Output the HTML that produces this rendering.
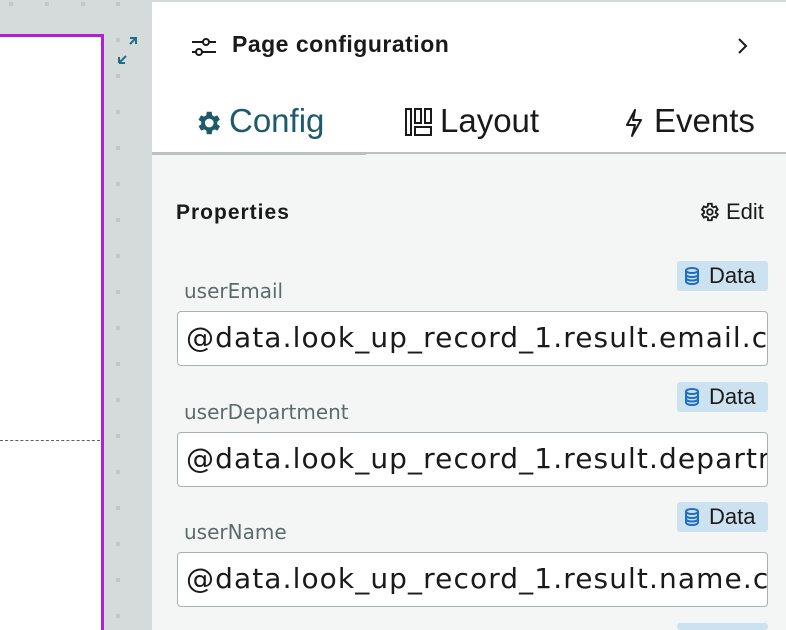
<!DOCTYPE html>
<html style="overflow:hidden;width:786px;height:630px"><head><meta charset="utf-8"><style>
*{margin:0;padding:0;box-sizing:border-box}
body{width:786px;height:630px;overflow:hidden;position:relative;background:#d5dbdb;font-family:"Liberation Sans",sans-serif}
.a{position:absolute}
.dot{position:absolute;width:4px;height:4px;background:#c2c8c8}
.canvas{left:0;top:34px;width:104px;height:596px;background:#fff;border-top:3px solid #b31fd6;border-right:3px solid #b31fd6}
.panel{left:152px;top:2px;width:634px;height:628px;background:#f4f6f6}
.head{left:152px;top:2px;width:634px;height:152px;background:#fff;border-bottom:2px solid #b9c1c1}
.tab{position:absolute;top:102px;font-size:33px;color:#1a1a1a}
.badge{position:absolute;left:677px;width:91px;height:30px;background:#cde2f0;border-radius:3px;font-size:22px;color:#1a1a1a;padding-left:32px;line-height:30px;overflow:hidden}
.badge svg{position:absolute;left:7px;top:6px}
.lbl{position:absolute;left:184px;font-size:20px;color:#5e6b6b;font-family:"DejaVu Sans",sans-serif}
.inp{position:absolute;left:177px;width:591px;height:55px;background:#fff;border:1.5px solid #a9b2b2;border-radius:4px;font-size:28px;letter-spacing:1.1px;color:#1a1a1a;padding-left:8px;line-height:52px;overflow:hidden;white-space:nowrap;font-family:"DejaVu Sans",sans-serif}
</style></head><body>
<div class="dot" style="left:9px;top:2px"></div><div class="dot" style="left:45px;top:2px"></div><div class="dot" style="left:81px;top:2px"></div><div class="dot" style="left:116px;top:2px"></div>
<div class="dot" style="left:116px;top:38px"></div><div class="dot" style="left:116px;top:74px"></div><div class="dot" style="left:116px;top:110px"></div><div class="dot" style="left:116px;top:146px"></div><div class="dot" style="left:116px;top:182px"></div><div class="dot" style="left:116px;top:218px"></div><div class="dot" style="left:116px;top:254px"></div><div class="dot" style="left:116px;top:290px"></div><div class="dot" style="left:116px;top:326px"></div><div class="dot" style="left:116px;top:362px"></div><div class="dot" style="left:116px;top:398px"></div><div class="dot" style="left:116px;top:434px"></div><div class="dot" style="left:116px;top:470px"></div><div class="dot" style="left:116px;top:506px"></div><div class="dot" style="left:116px;top:542px"></div><div class="dot" style="left:116px;top:578px"></div><div class="dot" style="left:116px;top:614px"></div>
<div class="a canvas"></div>
<div class="a" style="left:0;top:440px;width:100px;border-top:1.5px dashed #5a6363"></div>
<svg class="a" style="left:116px;top:34px" width="34" height="32" viewBox="0 0 34 32" fill="none" stroke="#1f6f86" stroke-width="2"><path d="M14 4h6v6M20 4l-6 6M3 29v-6M3 29h6M3 29l7-7"/></svg>
<div class="a panel"></div>
<div class="a head"></div>
<div class="a" style="left:152px;top:152px;width:214px;height:3px;background:#b9c1c1"></div>
<svg class="a" style="left:191px;top:36px" width="26" height="22" viewBox="0 0 26 22" fill="none" stroke="#1a1a1a" stroke-width="2"><path d="M1 6h24M1 16h24"/><circle cx="15" cy="6" r="3" fill="#fff"/><circle cx="8" cy="16" r="3" fill="#fff"/></svg>
<div class="a" style="left:232px;top:31px;font-size:23px;font-weight:bold;color:#1a1a1a;letter-spacing:0.5px">Page configuration</div>
<svg class="a" style="left:737px;top:37px" width="12" height="18" viewBox="0 0 12 18" fill="none" stroke="#1a1a1a" stroke-width="2"><path d="M2 2l7 7-7 7"/></svg>
<svg class="a" style="left:193px;top:108px" width="30" height="30" viewBox="0 0 24 24"><path fill="#1d5a6b" d="M19.4 13a7.5 7.5 0 000-2l2.1-1.6-2-3.5-2.5 1a7.5 7.5 0 00-1.7-1L15 3h-4l-.4 2.9a7.5 7.5 0 00-1.7 1l-2.5-1-2 3.5L6.6 11a7.5 7.5 0 000 2l-2.1 1.6 2 3.5 2.5-1a7.5 7.5 0 001.7 1L11 21h4l.4-2.9a7.5 7.5 0 001.7-1l2.5 1 2-3.5zM13 15.5a3.5 3.5 0 110-7 3.5 3.5 0 010 7z"/></svg>
<div class="tab" style="left:229px;color:#1d5a6b">Config</div>
<svg class="a" style="left:405px;top:108px" width="32" height="28" viewBox="0 0 32 28" fill="none" stroke="#1a1a1a" stroke-width="2"><rect x="1" y="1" width="5" height="26"/><rect x="10" y="1" width="6" height="14"/><rect x="20" y="1" width="6" height="14"/><rect x="10" y="19" width="16" height="8"/></svg>
<div class="tab" style="left:440px">Layout</div>
<svg class="a" style="left:623px;top:108px" width="22" height="30" viewBox="0 0 22 30" fill="none" stroke="#1a1a1a" stroke-width="2" stroke-linejoin="round"><path d="M12 2L4 17h8l-3 11 9-16h-8z"/></svg>
<div class="tab" style="left:654px">Events</div>
<div class="a" style="left:176px;top:201px;font-size:21px;font-weight:bold;color:#1a1a1a;letter-spacing:1px">Properties</div>
<svg class="a" style="left:698px;top:201px" width="22" height="22" viewBox="0 0 24 24" fill="none" stroke="#1a1a1a" stroke-width="2"><path d="M19.4 13a7.5 7.5 0 000-2l2.1-1.6-2-3.5-2.5 1a7.5 7.5 0 00-1.7-1L15 3h-4l-.4 2.9a7.5 7.5 0 00-1.7 1l-2.5-1-2 3.5L6.6 11a7.5 7.5 0 000 2l-2.1 1.6 2 3.5 2.5-1a7.5 7.5 0 001.7 1L11 21h4l.4-2.9a7.5 7.5 0 001.7-1l2.5 1 2-3.5z"/><circle cx="13" cy="12" r="3"/></svg>
<div class="a" style="left:726px;top:199px;font-size:22px;color:#1a1a1a">Edit</div>

<div class="badge" style="top:261px"><svg width="16" height="18" viewBox="0 0 16 18" fill="none" stroke="#1f6fc0" stroke-width="2"><ellipse cx="8" cy="3.5" rx="6" ry="2.5"/><path d="M2 3.5v11c0 1.4 2.7 2.5 6 2.5s6-1.1 6-2.5v-11M2 7.5c0 1.4 2.7 2.5 6 2.5s6-1.1 6-2.5M2 11c0 1.4 2.7 2.5 6 2.5s6-1.1 6-2.5"/></svg>Data</div>
<div class="lbl" style="top:279px">userEmail</div>
<div class="inp" style="top:311px">@data.look_up_record_1.result.email.current</div>

<div class="badge" style="top:382px"><svg width="16" height="18" viewBox="0 0 16 18" fill="none" stroke="#1f6fc0" stroke-width="2"><ellipse cx="8" cy="3.5" rx="6" ry="2.5"/><path d="M2 3.5v11c0 1.4 2.7 2.5 6 2.5s6-1.1 6-2.5v-11M2 7.5c0 1.4 2.7 2.5 6 2.5s6-1.1 6-2.5M2 11c0 1.4 2.7 2.5 6 2.5s6-1.1 6-2.5"/></svg>Data</div>
<div class="lbl" style="top:400px">userDepartment</div>
<div class="inp" style="top:432px">@data.look_up_record_1.result.department</div>

<div class="badge" style="top:502px"><svg width="16" height="18" viewBox="0 0 16 18" fill="none" stroke="#1f6fc0" stroke-width="2"><ellipse cx="8" cy="3.5" rx="6" ry="2.5"/><path d="M2 3.5v11c0 1.4 2.7 2.5 6 2.5s6-1.1 6-2.5v-11M2 7.5c0 1.4 2.7 2.5 6 2.5s6-1.1 6-2.5M2 11c0 1.4 2.7 2.5 6 2.5s6-1.1 6-2.5"/></svg>Data</div>
<div class="lbl" style="top:520px">userName</div>
<div class="inp" style="top:552px">@data.look_up_record_1.result.name.current</div>

<div class="badge" style="top:623px;height:7px"></div>
</body></html>
